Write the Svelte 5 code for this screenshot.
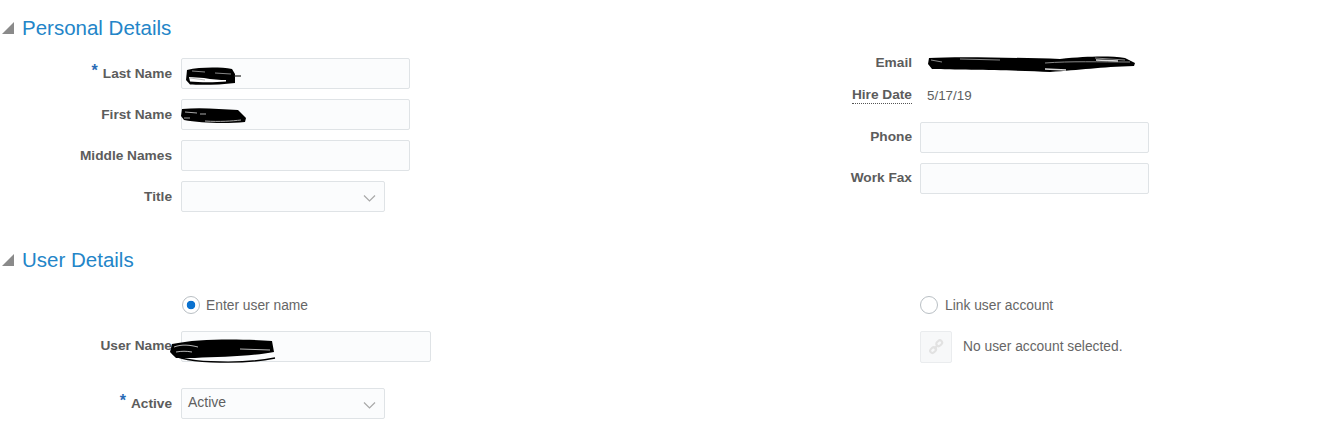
<script>
  const chevron = 'M1 1.5 L6.5 7 L12 1.5';
</script>

<div class="page">
  <section class="personal">
    <h2 class="head"><span class="tri"></span>Personal Details</h2>
    <div class="cols">
      <div class="col">
        <div class="row">
          <label class="lbl"><span class="req">*</span>Last Name</label>
          <div class="field wide">
            <svg class="scrib s1" width="64" height="24" viewBox="182 64 64 24" aria-hidden="true">
              <path d="M187 70 C200 67 220 67 232 69 L235 74 L235 83 C220 85 200 85 190 84.5 L186 80 Z" fill="#000"/>
              <path d="M189 77 L204 78 C212 79.5 220 80 226 80 L226 81.5 C215 82.5 200 82.5 190 81.5 Z" fill="#fff"/>
              <path d="M190 78 L205 80 M215 73 L231 74 M192 71 L205 72" stroke="#aaa" stroke-width="0.8" fill="none"/>
              <path d="M234 76 L241 76" stroke="#222" stroke-width="1.2" fill="none"/>
            </svg>
          </div>
        </div>
        <div class="row">
          <label class="lbl">First Name</label>
          <div class="field wide">
            <svg class="scrib s2" width="68" height="22" viewBox="180 104 68 22" aria-hidden="true">
              <path d="M182 109 C200 107 220 109 238 110 L246 118 L245 122 C225 124 200 123 184 120 L181 116 Z" fill="#000"/>
              <path d="M185 112 L197 113 M184 118 L190 118 M200 114 L206 114 M205 121 C220 122 232 121 241 120" stroke="#bbb" stroke-width="0.9" fill="none"/>
            </svg>
          </div>
        </div>
        <div class="row">
          <label class="lbl">Middle Names</label>
          <div class="field wide"></div>
        </div>
        <div class="row">
          <label class="lbl">Title</label>
          <div class="field select">
            <svg class="chev" width="13" height="8" viewBox="0 0 13 8" aria-hidden="true"><path d={chevron}/></svg>
          </div>
        </div>
      </div>

      <div class="col">
        <div class="row text email">
          <label class="lbl">Email</label>
          <div class="val">
            <svg class="scrib s3" width="216" height="22" viewBox="922 54 216 22" aria-hidden="true">
              <path d="M929 58 C960 56 1020 58 1060 59 C1090 56 1110 56 1125 58 L1135 63 L1134 66 C1100 67 1080 70 1050 72 C1020 70 960 70 932 69 L928 64 Z" fill="#000"/>
              <path d="M931 60 L942 62 M1045 63 C1070 61 1100 62 1130 62 M960 59 L1000 60 M1095 58 L1125 60" stroke="#999" stroke-width="0.9" fill="none"/>
              <path d="M1045 69 L1066 70 M1096 60 L1118 61" stroke="#ddd" stroke-width="1.4" fill="none"/>
            </svg>
          </div>
        </div>
        <div class="row text hire">
          <label class="lbl"><span class="dotted">Hire Date</span></label>
          <div class="val">5/17/19</div>
        </div>
        <div class="row">
          <label class="lbl">Phone</label>
          <div class="field wide"></div>
        </div>
        <div class="row">
          <label class="lbl">Work Fax</label>
          <div class="field wide"></div>
        </div>
      </div>
    </div>
  </section>

  <section class="user">
    <h2 class="head"><span class="tri"></span>User Details</h2>
    <div class="cols">
      <div class="col">
        <div class="row text radio-row">
          <span class="lbl"></span>
          <span class="radio on"></span><span class="opt">Enter user name</span>
        </div>
        <div class="row">
          <label class="lbl uname">User Name</label>
          <div class="field long">
            <svg class="scrib s4" width="112" height="30" viewBox="165 336 112 30" aria-hidden="true">
              <path d="M172 344 C200 338 245 339 272 341 L274 352 C255 356 220 357 195 358 L176 358 L170 352 Z" fill="#000"/>
              <path d="M174 347 C182 344 190 345 198 347 M176 352 C182 351 186 351 192 352 M240 349 L270 350" stroke="#ccc" stroke-width="0.9" fill="none"/>
              <path d="M172 352 C174 363 240 365 275 358" stroke="#000" stroke-width="1.4" fill="none"/>
            </svg>
          </div>
        </div>
        <div class="row active">
          <label class="lbl"><span class="req">*</span>Active</label>
          <div class="field select">
            <span class="fv">Active</span>
            <svg class="chev" width="13" height="8" viewBox="0 0 13 8" aria-hidden="true"><path d={chevron}/></svg>
          </div>
        </div>
      </div>

      <div class="col">
        <div class="row text radio-row">
          <span class="lbl"></span>
          <span class="radio"></span><span class="opt">Link user account</span>
        </div>
        <div class="row linkrow">
          <span class="lbl"></span>
          <button class="linkbtn" aria-label="Link" disabled>
            <svg width="16" height="16" viewBox="0 0 20 20" aria-hidden="true">
              <g fill="none" stroke="#e2e2e2" stroke-width="2.6">
                <rect x="10" y="2.5" width="8" height="5.6" rx="2.8" transform="rotate(-45 14 5.3)"/>
                <rect x="2.4" y="11" width="8" height="5.6" rx="2.8" transform="rotate(-45 6.4 13.8)"/>
                <path d="M7.5 12.5 L12.5 7.5"/>
              </g>
            </svg>
          </button>
          <span class="msg">No user account selected.</span>
        </div>
      </div>
    </div>
  </section>
</div>

<style>
  :global(body) {
    margin: 0;
    background: #fff;
  }
  .page {
    width: 1323px;
    height: 428px;
    overflow: hidden;
    font-family: "Liberation Sans", Arial, sans-serif;
    color: #595959;
    font-size: 13.7px;
  }
  .personal {
    padding-top: 14px;
  }
  .user {
    padding-top: 24px;
  }
  .head {
    display: flex;
    align-items: center;
    height: 28px;
    margin: 0 0 16px;
    padding-left: 2px;
    font-size: 20.5px;
    font-weight: 400;
    color: #2385c8;
  }
  .tri {
    flex: none;
    width: 0;
    height: 0;
    margin-right: 8px;
    border-style: solid;
    border-width: 0 0 12px 12px;
    border-color: transparent transparent #8a8a8a transparent;
  }
  .cols {
    display: grid;
    grid-template-columns: 739px 1fr;
  }
  .col {
    display: flex;
    flex-direction: column;
  }
  .row {
    display: flex;
    align-items: center;
    height: 31px;
    margin-bottom: 10px;
  }
  .lbl {
    flex: none;
    width: 172px;
    margin-right: 9px;
    padding-bottom: 1px;
    text-align: right;
    font-weight: 700;
    color: #5c5c5c;
    white-space: nowrap;
  }
  .col + .col .lbl {
    width: 173px;
    margin-right: 8px;
  }
  .col + .col .row:not(.text) .lbl,
  .lbl.uname {
    padding-bottom: 3px;
  }
  .req {
    position: relative;
    top: -2px;
    margin-right: 5px;
    color: #2a6bb5;
    font-size: 16px;
  }
  .field {
    position: relative;
    box-sizing: border-box;
    display: flex;
    align-items: center;
    height: 31px;
    background: #fbfcfd;
    border: 1px solid #dfe3e6;
    border-radius: 2px;
  }
  .wide {
    width: 229px;
  }
  .long {
    width: 250px;
  }
  .select {
    width: 204px;
  }
  .fv {
    margin-top: -4px;
    padding-left: 6px;
    color: #5f5f5f;
    font-size: 14px;
  }
  .chev {
    position: absolute;
    right: 8px;
    top: 12px;
    fill: none;
    stroke: #a8a8a8;
    stroke-width: 1.2;
  }
  .scrib {
    position: absolute;
    pointer-events: none;
  }
  .s1 {
    left: 0;
    top: 5px;
  }
  .s2 {
    left: -2px;
    top: 4px;
  }
  .s3 {
    left: -5px;
    top: -9px;
  }
  .s4 {
    left: -17px;
    top: 4px;
  }
  .text {
    height: 22px;
  }
  .email {
    margin-top: -6px;
  }
  .hire {
    margin-bottom: 16px;
  }
  .val {
    position: relative;
    margin-left: 7px;
    color: #5f5f5f;
    font-size: 13.4px;
  }
  .dotted {
    padding-bottom: 1px;
    border-bottom: 1px dotted #555;
  }
  .radio-row {
    height: 20px;
    margin-top: 5px;
    margin-bottom: 16px;
  }
  .radio {
    box-sizing: border-box;
    flex: none;
    width: 18px;
    height: 18px;
    margin-left: 1px;
    margin-right: 6px;
    background: #fff;
    border: 1.5px solid #b9bfc4;
    border-radius: 50%;
  }
  .col + .col .radio {
    margin-left: 0;
    margin-right: 7px;
  }
  .radio.on {
    background: radial-gradient(circle, #0b72cf 0 4px, #fff 4.6px);
  }
  .opt {
    color: #666;
    font-size: 13.8px;
  }
  .active {
    margin-top: 16px;
  }
  .linkbtn {
    box-sizing: border-box;
    display: flex;
    align-items: center;
    justify-content: center;
    width: 32px;
    height: 32px;
    padding: 0;
    background: #f7f8f9;
    border: 1px solid #eaecee;
    border-radius: 2px;
  }
  .msg {
    margin-left: 11px;
    color: #666;
    font-size: 13.8px;
  }
</style>
